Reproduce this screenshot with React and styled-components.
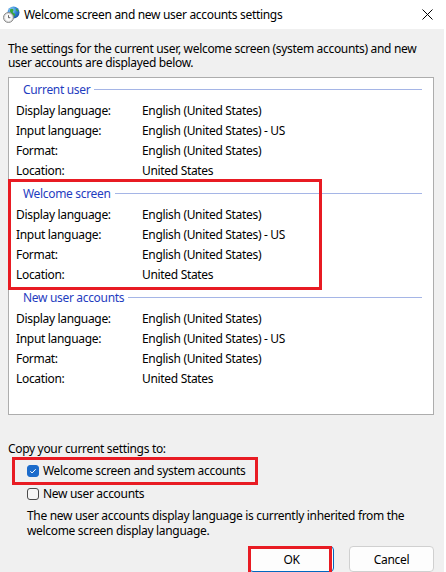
import styled, { createGlobalStyle } from 'styled-components';

const GlobalStyle = createGlobalStyle`
  html, body {
    margin: 0;
    padding: 0;
    background: #fff;
  }
  body {
    font-family: 'Segoe UI', 'Noto Sans', 'Liberation Sans', sans-serif;
    font-size: 12px;
    letter-spacing: -0.32px;
    color: #000;
  }
`;

const Window = styled.div`
  width: 446px;
  height: 572px;
  display: flex;
  flex-direction: column;
  overflow: hidden;
  background: #fff;
`;

const TitleBar = styled.div`
  height: 29px;
  flex-shrink: 0;
  display: flex;
  align-items: center;
  padding: 0 0 0 3px;
`;

const Title = styled.span`
  margin-left: 4px;
  flex: 1;
  font-size: 12px;
  margin-top: -1px;
`;

const Close = styled.div`
  width: 46px;
  height: 29px;
  display: grid;
  place-items: center;
  margin-right: -4px;
`;

const Body = styled.div`
  flex: 1;
  background: #f0f0f0;
  padding: 13px 10px 0 8px;
  display: flex;
  flex-direction: column;
  border-right: 2px solid #fff;
`;

const Intro = styled.p`
  margin: 0;
  line-height: 14px;
`;

const Box = styled.div`
  margin-top: 7px;
  height: 335px;
  background: #fff;
  border: 1px solid #adadad;
  padding: 1px 11px 0 7px;
`;

const Group = styled.div`
  position: relative;
  margin-bottom: 3px;
  ${({ $marked }) =>
    $marked &&
    `
    &::after {
      content: '';
      position: absolute;
      left: -8px;
      top: -4px;
      width: 308px;
      height: 105px;
      border: 3px solid #e81b23;
    }
  `}
`;

const GroupHeader = styled.div`
  height: 21px;
  display: flex;
  align-items: center;
  padding-left: 7px;
  color: #1f3dbf;
  &::after {
    content: '';
    flex: 1;
    height: 1px;
    margin-left: 4px;
    background: #a5b5e6;
  }
`;

const Row = styled.div`
  height: 20px;
  display: flex;
  align-items: center;
`;

const Label = styled.span`
  width: 126px;
`;

const CopyLabel = styled.div`
  margin-top: 26px;
  line-height: 15px;
`;

const Options = styled.div`
  padding-left: 19px;
  margin-top: 3px;
`;

const CheckRow = styled.label`
  position: relative;
  height: 23px;
  display: flex;
  align-items: center;
  gap: 4px;
  ${({ $marked }) =>
    $marked &&
    `
    &::after {
      content: '';
      position: absolute;
      left: -15px;
      top: -2px;
      width: 240px;
      height: 22px;
      border: 3px solid #e81b23;
    }
  `}
`;

const CheckBox = styled.span`
  width: 12px;
  height: 12px;
  border-radius: 3px;
  box-sizing: border-box;
  display: grid;
  place-items: center;
  background: ${({ $checked }) => ($checked ? '#1d6ccb' : '#f6f6f6')};
  border: 1px solid ${({ $checked }) => ($checked ? '#1d6ccb' : '#4a4a4a')};
`;

const Note = styled.p`
  margin: 3px 0 0;
  line-height: 15px;
`;

const Buttons = styled.div`
  margin-top: 8px;
  display: flex;
  justify-content: flex-end;
  gap: 15px;
`;

const Button = styled.button`
  position: relative;
  width: 85px;
  height: 26px;
  font-family: inherit;
  font-size: 12px;
  letter-spacing: inherit;
  color: #000;
  background: #fdfdfd;
  border: 1px solid ${({ $primary }) => ($primary ? '#0067c0' : '#d0d0d0')};
  border-radius: 4px;
  padding: 0;
  ${({ $marked }) =>
    $marked &&
    `
    &::after {
      content: '';
      position: absolute;
      left: -2px;
      top: -1px;
      width: 78px;
      height: 26px;
      border: 3px solid #e81b23;
    }
  `}
`;

const AppIcon = () => (
  <svg width="17" height="17" viewBox="0 0 17 17">
    <defs>
      <radialGradient id="globe" cx="0.35" cy="0.3" r="0.8">
        <stop offset="0" stopColor="#9fd7ff" />
        <stop offset="0.5" stopColor="#2f86d6" />
        <stop offset="1" stopColor="#1a4f9c" />
      </radialGradient>
    </defs>
    <circle cx="10.5" cy="6.5" r="6" fill="url(#globe)" />
    <path d="M7 3.5c1.5-1 3-.8 3.5.3.4 1-1 1.6-.6 2.7.4 1 2 .6 2.3 1.8.2 1-.6 2-1.6 2.3-1-1.2-.5-2.2-1.6-2.8C8 7.2 6.6 6.2 7 3.5z" fill="#3aa83a" />
    <path d="M13 2.5c1 .4 2.2 1.6 2.5 3-.8.2-1.7-.3-2.2-1.1-.3-.6-.5-1.2-.3-1.9z" fill="#3aa83a" />
    <circle cx="5.5" cy="11.5" r="5" fill="#dcdcdc" stroke="#8a8a8a" strokeWidth="1" />
    <circle cx="5.5" cy="11.5" r="3.4" fill="#fafafa" />
    <path d="M5.5 9.2v2.5h1.8" stroke="#555" strokeWidth="0.9" fill="none" />
  </svg>
);

const CloseIcon = () => (
  <svg width="11" height="11" viewBox="0 0 11 11">
    <path d="M0.5 0.5l10 10M10.5 0.5l-10 10" stroke="#000" strokeWidth="1" />
  </svg>
);

const CheckMark = () => (
  <svg width="8" height="8" viewBox="0 0 8 8">
    <path d="M1.3 4.2l1.8 1.8 3.6-3.8" stroke="#fff" strokeWidth="1" fill="none" />
  </svg>
);

const settings = [
  ['Display language:', 'English (United States)'],
  ['Input language:', 'English (United States) - US'],
  ['Format:', 'English (United States)'],
  ['Location:', 'United States'],
];

const groups = [
  { title: 'Current user' },
  { title: 'Welcome screen', marked: true },
  { title: 'New user accounts' },
];

const App = () => {
  return (
    <>
      <GlobalStyle />
      <Window>
        <TitleBar>
          <AppIcon />
          <Title>Welcome screen and new user accounts settings</Title>
          <Close>
            <CloseIcon />
          </Close>
        </TitleBar>
        <Body>
          <Intro>
            The settings for the current user, welcome screen (system accounts) and new
            <br />
            user accounts are displayed below.
          </Intro>
          <Box>
            {groups.map((g) => (
              <Group key={g.title} $marked={g.marked}>
                <GroupHeader>{g.title}</GroupHeader>
                {settings.map(([label, value]) => (
                  <Row key={label}>
                    <Label>{label}</Label>
                    <span>{value}</span>
                  </Row>
                ))}
              </Group>
            ))}
          </Box>
          <CopyLabel>Copy your current settings to:</CopyLabel>
          <Options>
            <CheckRow $marked>
              <CheckBox $checked>
                <CheckMark />
              </CheckBox>
              Welcome screen and system accounts
            </CheckRow>
            <CheckRow>
              <CheckBox />
              New user accounts
            </CheckRow>
            <Note>
              The new user accounts display language is currently inherited from the
              <br />
              welcome screen display language.
            </Note>
          </Options>
          <Buttons>
            <Button $primary $marked>OK</Button>
            <Button>Cancel</Button>
          </Buttons>
        </Body>
      </Window>
    </>
  );
};

export default App;
